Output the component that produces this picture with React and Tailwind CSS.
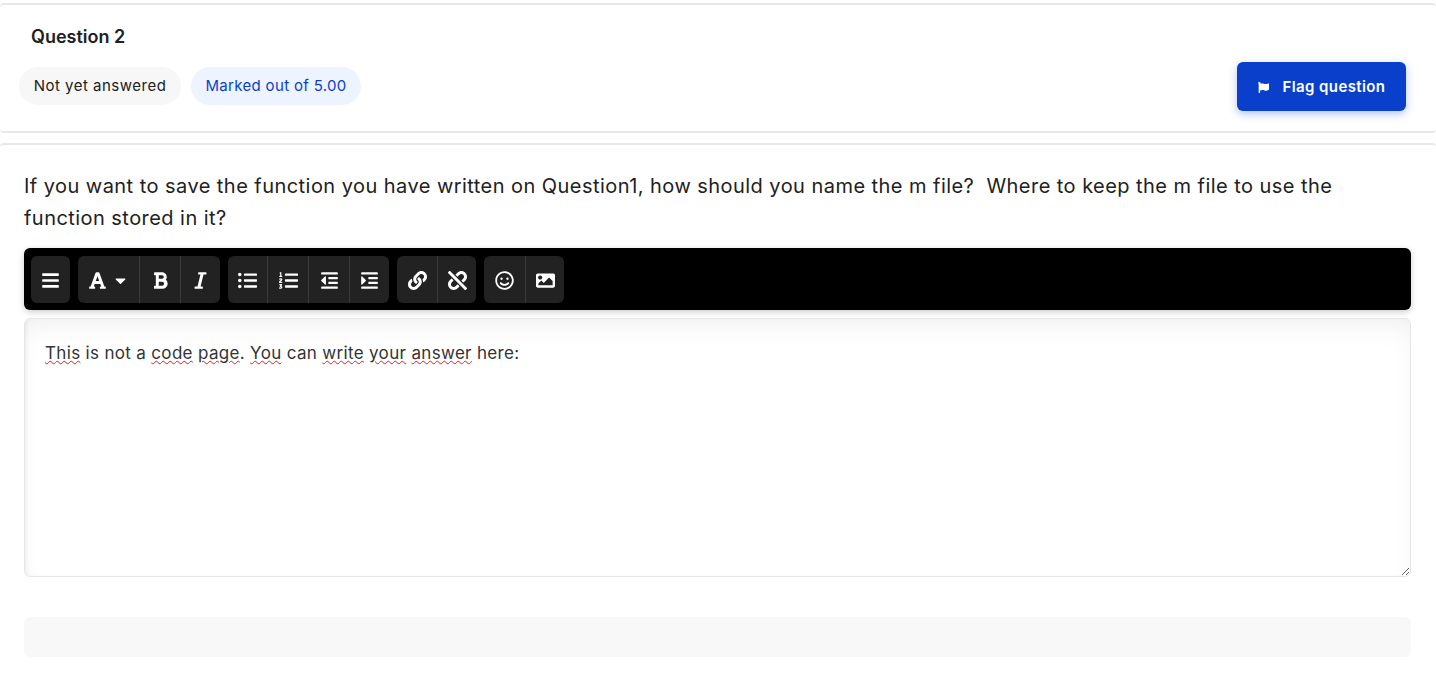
import {
  FaBars,
  FaBold,
  FaCaretDown,
  FaFlag,
  FaFont,
  FaImage,
  FaIndent,
  FaItalic,
  FaLink,
  FaListOl,
  FaListUl,
  FaOutdent,
  FaRegSmile,
  FaUnlink,
} from "react-icons/fa";

const groups = [
  [{ icon: FaBars, w: "w-[39px]" }],
  [
    { icon: FaFont, w: "w-[61px]", caret: true },
    { icon: FaBold, w: "w-[41px]" },
    { icon: FaItalic, w: "w-[40px]" },
  ],
  [
    { icon: FaListUl, w: "w-[39px]" },
    { icon: FaListOl, w: "w-[41px]" },
    { icon: FaOutdent, w: "w-[41px]" },
    { icon: FaIndent, w: "w-[40px]" },
  ],
  [
    { icon: FaLink, w: "w-[40px]" },
    { icon: FaUnlink, w: "w-[39px]" },
  ],
  [
    { icon: FaRegSmile, w: "w-[41px]" },
    { icon: FaImage, w: "w-[39px]" },
  ],
];

const Typo = ({ children }) => (
  <span className="underline decoration-wavy decoration-[#e02020] decoration-1 underline-offset-1">
    {children}
  </span>
);

function Toolbar() {
  return (
    <div className="flex h-[62px] items-center gap-2 rounded-md bg-black px-[7px] shadow-[0_2px_6px_rgba(0,0,0,0.2)]">
      {groups.map((group, i) => (
        <div key={i} className="flex h-[47px] overflow-hidden rounded-md bg-[#222222]">
          {group.map((b, j) => {
            const Icon = b.icon;
            return (
              <button
                key={j}
                type="button"
                className={`flex h-full items-center justify-center gap-[5px] pt-[2px] text-white ${b.w} ${
                  j > 0 ? "border-l border-[#3a3a3a]" : ""
                }`}
              >
                <Icon className="text-[19px]" />
                {b.caret && <FaCaretDown className="text-[17px]" />}
              </button>
            );
          })}
        </div>
      ))}
    </div>
  );
}

export default function App() {
  return (
    <div className="min-h-[700px] bg-white pt-[3px] font-['Inter','Noto_Sans',sans-serif] text-[#212121]">
      <div className="flex h-[130px] items-start justify-between rounded-[4px] border-y-2 border-[#e8e8e8] pr-[30px]">
        <div className="pl-[19px]">
          <h2 className="mt-[19px] pl-[12px] text-[18px] leading-[26px] font-semibold">Question 2</h2>
          <div className="mt-[17px] flex gap-[10px]">
            <span className="flex h-[38px] w-[162px] items-center justify-center rounded-full bg-[#f7f7f7] text-[15px] tracking-[0.5px]">
              Not yet answered
            </span>
            <span className="flex h-[38px] w-[170px] items-center justify-center rounded-full bg-[#edf3ff] text-[15px] tracking-[0.33px] text-[#0a3fcc]">
              Marked out of 5.00
            </span>
          </div>
        </div>
        <button
          type="button"
          className="mt-[57px] flex h-[49px] w-[169px] items-center justify-center gap-[14px] rounded-md bg-[#0a3fcc] pt-[2px] text-[15px] font-semibold tracking-[0.4px] text-white shadow-[0_3px_8px_rgba(10,63,204,0.3)]"
        >
          <FaFlag className="text-[11px]" />
          Flag question
        </button>
      </div>

      <div className="mt-[10px] rounded-[4px] border-t-2 border-[#e8e8e8] pr-[25px] pl-6 pt-[25px]">
        <p className="text-[20px] leading-[32px] tracking-[0.45px] text-[#212121]">
          If you want to save the function you have written on Question1, how should you name the m file?&nbsp; Where to keep the m file to use the function stored in it?
        </p>
        <div className="mt-[14px]">
          <Toolbar />
        </div>
        <div className="mt-2 h-[259px] resize-y overflow-auto rounded-md border border-[#e6e6e6] bg-white px-5 py-[22px] text-[17px] leading-6 tracking-[0.33px] text-[#333333] shadow-[inset_0_14px_30px_-12px_rgba(0,0,0,0.08),inset_3px_0_4px_-2px_rgba(0,0,0,0.07)]">
          <Typo>This</Typo> is not a <Typo>code</Typo> <Typo>page</Typo>. <Typo>You</Typo> can <Typo>write</Typo> <Typo>your</Typo> <Typo>answer</Typo> here:
        </div>
        <div className="mt-10 h-10 rounded-md bg-[#f8f8f8]" />
      </div>
    </div>
  );
}
